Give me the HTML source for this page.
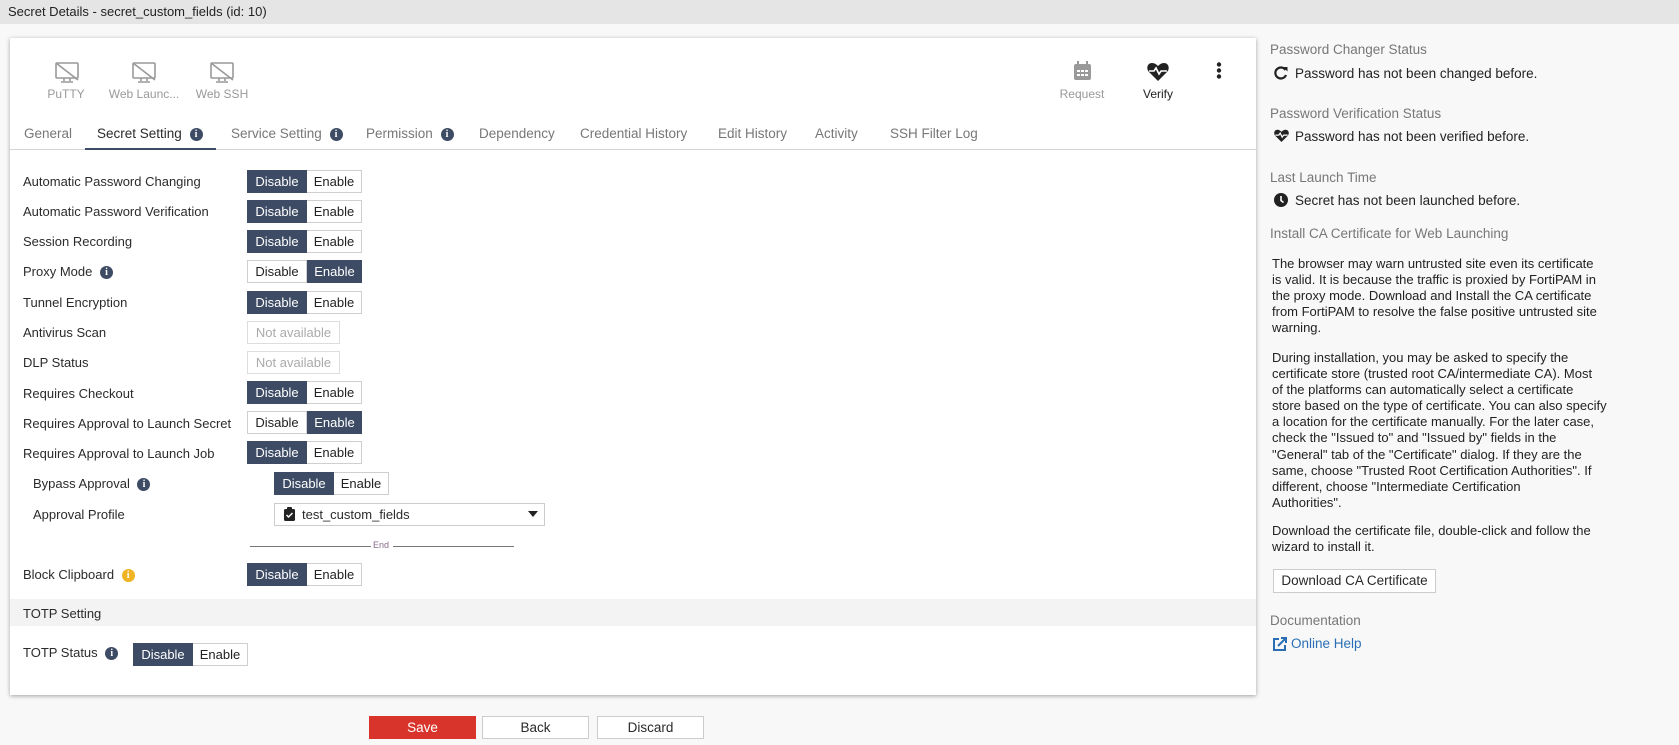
<!DOCTYPE html>
<html><head><meta charset="utf-8"><style>
*{box-sizing:border-box;margin:0;padding:0}
body{width:1679px;height:745px;overflow:hidden;background:#f8f8f8;font-family:"Liberation Sans",sans-serif;font-size:13px;color:#2a2a2a;position:relative}
.a{position:absolute;white-space:nowrap}
.hdr{left:0;top:0;width:1679px;height:24px;background:#e5e5e5;padding:4px 0 0 8px;font-size:13px;color:#222}
.card{left:10px;top:38px;width:1246px;height:657px;background:#fff;box-shadow:0 1px 4px rgba(0,0,0,.35)}
.lbl{font-size:13px;color:#2b2b2b}
.tg{position:absolute;display:flex;height:23px;font-size:13px}
.tg span{display:block;height:23px;line-height:21px;text-align:center;border:1px solid #cfcfcf;background:#fff;color:#222}
.tg span.on{background:#3d4b64;border-color:#3d4b64;color:#fff}
.tg span:first-child{width:60px}.tg span:last-child{width:55px;border-left:none}
.tg span.on:last-child{border-left:1px solid #3d4b64}
.na{position:absolute;width:93px;height:23px;border:1px solid #ddd;color:#aaa;text-align:center;line-height:21px;font-size:13px}
.info{display:inline-block;width:13px;height:13px;border-radius:50%;background:#3d4b64;color:#fff;font-size:10px;font-weight:bold;text-align:center;line-height:13px;vertical-align:1px;margin-left:4px;font-family:"Liberation Serif",serif}
.tab{position:absolute;top:126px;font-size:13.5px;color:#777}
.rt{font-size:13.5px;color:#777}
.rv{font-size:13.5px;color:#222}
.btn{position:absolute;height:23px;border:1px solid #ccc;background:#fff;text-align:center;line-height:21px;font-size:13.5px}
.tb{position:absolute;font-size:12px;color:#999;text-align:center;width:80px}
</style></head><body>
<div class="a hdr">Secret Details - secret_custom_fields (id: 10)</div>
<div class="a card"></div>

<svg class="a" style="left:54px;top:61px" width="26" height="24" viewBox="0 0 26 24" fill="none" stroke="#999" stroke-width="1.6"><rect x="2" y="2" width="22" height="15" rx="1"/><path d="M10 17v3M16 17v3M7 21h12M2 2l22 17"/></svg>
<svg class="a" style="left:131px;top:61px" width="26" height="24" viewBox="0 0 26 24" fill="none" stroke="#999" stroke-width="1.6"><rect x="2" y="2" width="22" height="15" rx="1"/><path d="M10 17v3M16 17v3M7 21h12M2 2l22 17"/></svg>
<svg class="a" style="left:209px;top:61px" width="26" height="24" viewBox="0 0 26 24" fill="none" stroke="#999" stroke-width="1.6"><rect x="2" y="2" width="22" height="15" rx="1"/><path d="M10 17v3M16 17v3M7 21h12M2 2l22 17"/></svg>
<div class="tb" style="left:26px;top:87px">PuTTY</div>
<div class="tb" style="left:104px;top:87px">Web Launc...</div>
<div class="tb" style="left:182px;top:87px">Web SSH</div>
<svg class="a" style="left:1074px;top:61px" width="17" height="19" viewBox="0 0 17 19"><rect x="0" y="3" width="17" height="16" rx="2" fill="#999"/><rect x="3" y="0" width="2" height="5" fill="#999"/><rect x="12" y="0" width="2" height="5" fill="#999"/><g fill="#fff"><rect x="3" y="9" width="3" height="2"/><rect x="7" y="9" width="3" height="2"/><rect x="11" y="9" width="3" height="2"/><rect x="3" y="13" width="3" height="2"/><rect x="7" y="13" width="3" height="2"/><rect x="11" y="13" width="3" height="2"/></g></svg>
<svg class="a" style="left:1147px;top:62px" width="22" height="19" viewBox="0 0 22 19"><path d="M11 19L2 10C-1 7 0 1 5 1c3 0 5 2 6 3 1-1 3-3 6-3 5 0 6 6 3 9z" fill="#222"/><path d="M2 9h5l2-3 3 6 2-3h6" stroke="#fff" stroke-width="1.6" fill="none"/></svg>
<svg class="a" style="left:1216px;top:62px" width="6" height="17" viewBox="0 0 6 17" fill="#222"><circle cx="3" cy="2.5" r="2.2"/><circle cx="3" cy="8.5" r="2.2"/><circle cx="3" cy="14.5" r="2.2"/></svg>
<div class="tb" style="left:1042px;top:87px">Request</div>
<div class="tb" style="left:1118px;top:87px;color:#222">Verify</div>

<div class="a" style="left:10px;top:149px;width:1246px;height:1px;background:#d5d5d5"></div>
<div class="a" style="left:85px;top:148px;width:131px;height:2px;background:#3d4b64"></div>
<div class="tab" style="left:24px">General</div>
<div class="tab" style="left:97px;color:#2b2b2b">Secret Setting <span class="info">i</span></div>
<div class="tab" style="left:231px">Service Setting <span class="info">i</span></div>
<div class="tab" style="left:366px">Permission <span class="info">i</span></div>
<div class="tab" style="left:479px">Dependency</div>
<div class="tab" style="left:580px">Credential History</div>
<div class="tab" style="left:718px">Edit History</div>
<div class="tab" style="left:815px">Activity</div>
<div class="tab" style="left:890px">SSH Filter Log</div>

<div class="a lbl" style="left:23px;top:174px">Automatic Password Changing</div><div class="tg" style="left:247px;top:170px"><span class="on">Disable</span><span>Enable</span></div>
<div class="a lbl" style="left:23px;top:204px">Automatic Password Verification</div><div class="tg" style="left:247px;top:200px"><span class="on">Disable</span><span>Enable</span></div>
<div class="a lbl" style="left:23px;top:234px">Session Recording</div><div class="tg" style="left:247px;top:230px"><span class="on">Disable</span><span>Enable</span></div>
<div class="a lbl" style="left:23px;top:264px">Proxy Mode <span class="info">i</span></div><div class="tg" style="left:247px;top:260px"><span>Disable</span><span class="on">Enable</span></div>
<div class="a lbl" style="left:23px;top:295px">Tunnel Encryption</div><div class="tg" style="left:247px;top:291px"><span class="on">Disable</span><span>Enable</span></div>
<div class="a lbl" style="left:23px;top:325px">Antivirus Scan</div><div class="na" style="left:247px;top:321px">Not available</div>
<div class="a lbl" style="left:23px;top:355px">DLP Status</div><div class="na" style="left:247px;top:351px">Not available</div>
<div class="a lbl" style="left:23px;top:386px">Requires Checkout</div><div class="tg" style="left:247px;top:381px"><span class="on">Disable</span><span>Enable</span></div>
<div class="a lbl" style="left:23px;top:416px">Requires Approval to Launch Secret</div><div class="tg" style="left:247px;top:411px"><span>Disable</span><span class="on">Enable</span></div>
<div class="a lbl" style="left:23px;top:446px">Requires Approval to Launch Job</div><div class="tg" style="left:247px;top:441px"><span class="on">Disable</span><span>Enable</span></div>
<div class="a lbl" style="left:33px;top:476px">Bypass Approval <span class="info">i</span></div><div class="tg" style="left:274px;top:472px"><span class="on">Disable</span><span>Enable</span></div>
<div class="a lbl" style="left:33px;top:507px">Approval Profile</div>
<div class="a" style="left:274px;top:503px;width:271px;height:23px;border:1px solid #ccc;background:#fff"></div>
<svg class="a" style="left:284px;top:507px" width="11" height="14" viewBox="0 0 11 14"><rect x="0" y="2" width="11" height="12" rx="1.5" fill="#222"/><rect x="3" y="0" width="5" height="3" rx="1" fill="#222"/><path d="M2.5 8l2 2 4-4" stroke="#fff" stroke-width="1.5" fill="none"/></svg>
<div class="a lbl" style="left:302px;top:507px">test_custom_fields</div>
<svg class="a" style="left:528px;top:511px" width="10" height="6"><path d="M0 0h10L5 6z" fill="#222"/></svg>
<div class="a" style="left:250px;top:546px;width:121px;height:1px;background:#777"></div>
<div class="a" style="left:373px;top:540px;font-size:9px;color:#8a6a8a">End</div>
<div class="a" style="left:393px;top:546px;width:121px;height:1px;background:#777"></div>
<div class="a lbl" style="left:23px;top:567px">Block Clipboard <span class="info" style="background:#f0b323">i</span></div><div class="tg" style="left:247px;top:563px"><span class="on">Disable</span><span>Enable</span></div>
<div class="a" style="left:10px;top:599px;width:1246px;height:27px;background:#f3f3f3"></div>
<div class="a lbl" style="left:23px;top:606px">TOTP Setting</div>
<div class="a lbl" style="left:23px;top:645px">TOTP Status <span class="info">i</span></div><div class="tg" style="left:133px;top:643px"><span class="on">Disable</span><span>Enable</span></div>

<div class="btn" style="left:369px;top:716px;width:107px;background:#d9342b;border-color:#d9342b;color:#fff">Save</div>
<div class="btn" style="left:482px;top:716px;width:107px">Back</div>
<div class="btn" style="left:597px;top:716px;width:107px">Discard</div>

<div class="a rt" style="left:1270px;top:42px">Password Changer Status</div>
<svg class="a" style="left:1274px;top:66px" width="14" height="14" viewBox="0 0 14 14"><path d="M11.5 4A5.5 5.5 0 1 0 12 9" stroke="#222" stroke-width="2.2" fill="none"/><path d="M9 1h4.5v4.5z" fill="#222"/></svg>
<div class="a rv" style="left:1295px;top:66px">Password has not been changed before.</div>
<div class="a rt" style="left:1270px;top:106px">Password Verification Status</div>
<svg class="a" style="left:1274px;top:129px" width="15" height="13" viewBox="0 0 22 19"><path d="M11 19L2 10C-1 7 0 1 5 1c3 0 5 2 6 3 1-1 3-3 6-3 5 0 6 6 3 9z" fill="#222"/><path d="M2 9h5l2-3 3 6 2-3h6" stroke="#fff" stroke-width="1.8" fill="none"/></svg>
<div class="a rv" style="left:1295px;top:129px">Password has not been verified before.</div>
<div class="a rt" style="left:1270px;top:170px">Last Launch Time</div>
<svg class="a" style="left:1274px;top:193px" width="14" height="14" viewBox="0 0 14 14"><circle cx="7" cy="7" r="7" fill="#222"/><path d="M7 3v4.5l2.5 2" stroke="#fff" stroke-width="1.6" fill="none"/></svg>
<div class="a rv" style="left:1295px;top:193px">Secret has not been launched before.</div>
<div class="a rt" style="left:1270px;top:226px">Install CA Certificate for Web Launching</div>
<div class="a rv" style="left:1272px;top:256px;line-height:16.1px;font-size:13px">The browser may warn untrusted site even its certificate<br>is valid. It is because the traffic is proxied by FortiPAM in<br>the proxy mode. Download and Install the CA certificate<br>from FortiPAM to resolve the false positive untrusted site<br>warning.</div>
<div class="a rv" style="left:1272px;top:350px;line-height:16.1px;font-size:13px">During installation, you may be asked to specify the<br>certificate store (trusted root CA/intermediate CA). Most<br>of the platforms can automatically select a certificate<br>store based on the type of certificate. You can also specify<br>a location for the certificate manually. For the later case,<br>check the "Issued to" and "Issued by" fields in the<br>"General" tab of the "Certificate" dialog. If they are the<br>same, choose "Trusted Root Certification Authorities". If<br>different, choose "Intermediate Certification<br>Authorities".</div>
<div class="a rv" style="left:1272px;top:523px;line-height:16.1px;font-size:13px">Download the certificate file, double-click and follow the<br>wizard to install it.</div>
<div class="btn" style="left:1273px;top:569px;width:163px;height:24px;line-height:22px">Download CA Certificate</div>
<div class="a rt" style="left:1270px;top:613px">Documentation</div>
<svg class="a" style="left:1273px;top:637px" width="14" height="14" viewBox="0 0 14 14"><path d="M6 2H1v11h11V8" stroke="#2a6fb5" stroke-width="2" fill="none"/><path d="M5 9l7-7M8 1h5v5" stroke="#2a6fb5" stroke-width="2" fill="none"/></svg>
<div class="a" style="left:1291px;top:636px;font-size:13.5px;color:#2a6fb5">Online Help</div>
</body></html>
